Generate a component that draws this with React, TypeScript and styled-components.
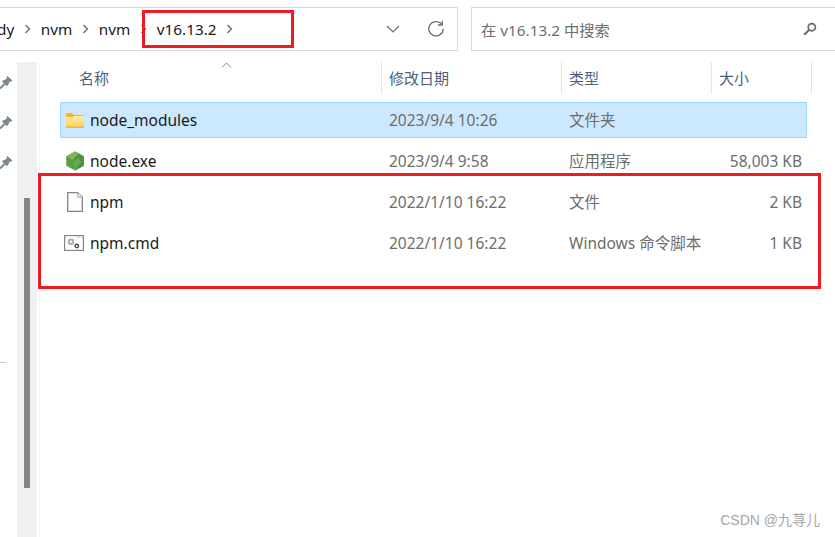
import React from 'react';
import styled, { createGlobalStyle } from 'styled-components';

const GlobalStyle = createGlobalStyle`
  html, body {
    margin: 0;
    padding: 0;
    background: #fff;
  }
`;

const Window = styled.div`
  position: relative;
  width: 835px;
  height: 537px;
  overflow: hidden;
  background: #fff;
  font-family: "Noto Sans", "Noto Sans CJK SC", sans-serif;
  font-size: 15.3px;
  color: #1a1a1a;
`;

const Toolbar = styled.div`
  display: flex;
  gap: 13px;
  height: 43px;
  padding-top: 7px;
  box-sizing: content-box;
`;

const AddressBox = styled.div`
  display: flex;
  align-items: center;
  width: 458px;
  flex-shrink: 0;
  box-sizing: border-box;
  height: 44px;
  border: 1px solid #d9d9d9;
  border-left: none;
`;

const Crumb = styled.span<{ $offset?: number }>`
  margin-left: ${({ $offset }) => $offset ?? 0}px;
  line-height: 42px;
`;

const Chevron = styled.svg`
  width: 7px;
  height: 10px;
  margin: 0 10px 0 9.5px;
  flex-shrink: 0;
`;

const AddressTools = styled.div`
  display: flex;
  align-items: center;
  margin-left: auto;
  height: 100%;
`;

const RefreshIcon = styled.svg`
  width: 18px;
  height: 18px;
  margin: 0 12px 0 27px;
`;

const SearchBox = styled.div`
  display: flex;
  align-items: center;
  justify-content: space-between;
  flex: 1;
  box-sizing: border-box;
  height: 44px;
  border: 1px solid #d9d9d9;
  border-right: none;
  padding: 0 18px 0 9px;
  color: #6e6e6e;
`;

const Body = styled.div`
  display: flex;
  height: 475px;
  margin-top: 12px;
`;

const PinRail = styled.div`
  display: flex;
  flex-direction: column;
  width: 17px;
  flex-shrink: 0;
  padding-top: 12px;
  gap: 23px;
  box-sizing: border-box;
`;

const PinRule = styled.div`
  width: 6px;
  height: 1px;
  margin-top: 168px;
  background: #c8c8c8;
`;

const ScrollTrack = styled.div`
  width: 20px;
  flex-shrink: 0;
  box-sizing: border-box;
  padding: 136px 7px 0;
  background: #f0f0f0;
`;

const ScrollThumb = styled.div`
  width: 6px;
  height: 290px;
  background: #858585;
`;

const Pane = styled.div`
  flex: 1;
  margin-left: 2px;
  border-left: 1px solid #f3f3f3;
`;

const HeaderRow = styled.div`
  position: relative;
  display: grid;
  grid-template-columns: 342px 180px 150px 100px;
  height: 32px;
`;

const HeaderCell = styled.div<{ $indent: number }>`
  display: flex;
  align-items: center;
  box-sizing: border-box;
  height: 32px;
  padding: 0 0 2px ${({ $indent }) => $indent}px;
  border-right: 1px solid #e5e5e5;
  font-size: 15px;
  color: #4c607a;
`;

const SortCaret = styled.svg`
  position: absolute;
  left: 181px;
  top: 0;
  width: 11px;
  height: 6px;
`;

const FileList = styled.div`
  display: flex;
  flex-direction: column;
  gap: 5px;
  margin: 8px 0 0 20px;
  width: 747px;
`;

const Row = styled.div<{ $selected?: boolean }>`
  display: grid;
  grid-template-columns: 328px 180px 150px 87px;
  align-items: center;
  height: 36px;
  box-sizing: border-box;
  border: 1px solid ${({ $selected }) => ($selected ? '#99d1ff' : 'transparent')};
  background: ${({ $selected }) => ($selected ? '#cce8ff' : 'transparent')};
  border-radius: 1px;
  font-size: 15.5px;
  line-height: 20px;
`;

const NameCell = styled.div`
  display: flex;
  align-items: center;
  gap: 5px;
  padding-left: 4px;
  color: #1a1a1a;
`;

const IconSlot = styled.div`
  display: flex;
  align-items: center;
  justify-content: center;
  width: 20px;
  height: 20px;
`;

const MetaCell = styled.div`
  color: #6d6d6d;
`;

const SizeCell = styled(MetaCell)`
  text-align: right;
  padding-right: 4px;
`;

const Annotation = styled.div<{ $l: number; $t: number; $w: number; $h: number }>`
  position: absolute;
  left: ${({ $l }) => $l}px;
  top: ${({ $t }) => $t}px;
  width: ${({ $w }) => $w}px;
  height: ${({ $h }) => $h}px;
  box-sizing: border-box;
  border: 3px solid #ed1c24;
`;

const Watermark = styled.div`
  position: absolute;
  right: 15px;
  bottom: 8px;
  font-family: "Liberation Sans", "Noto Sans CJK SC", sans-serif;
  font-size: 14px;
  color: #a6a6a6;
`;

const Arrow = () => (
  <Chevron viewBox="0 0 7 10">
    <path d="M1.5 1 L5.5 5 L1.5 9" fill="none" stroke="#6b6b6b" strokeWidth="1.3" />
  </Chevron>
);

const Pin = () => (
  <svg width="16" height="17" viewBox="0 0 16 17" style={{ marginLeft: -3 }}>
    <path d="M10.5 2 L15.5 6.5 L14 7.8 L12.8 7.4 L11 11 L10 12.2 L5 7.6 L6 6.6 L9.8 4.8 L9.4 3.2 Z" fill="#7c8790" />
    <path d="M7.5 10 L3 14.5" stroke="#7c8790" strokeWidth="2" />
  </svg>
);

const FolderIcon = () => (
  <svg width="18" height="15" viewBox="0 0 18 15">
    <defs>
      <linearGradient id="folderBody" x1="0" y1="0" x2="0" y2="1">
        <stop offset="0" stopColor="#fdeaa6" />
        <stop offset="1" stopColor="#fdd15e" />
      </linearGradient>
    </defs>
    <path d="M0 1 Q0 0 1 0 L6 0 L8 2 L18 2 L18 4 L0 4 Z" fill="#f4b52e" />
    <path d="M0 4 L7 4 L8.5 3 L18 3 L18 14 L0 14 Z" fill="url(#folderBody)" />
    <path d="M0 13.5 L18 13.5 L18 15 L0 15 Z" fill="#efb53c" />
  </svg>
);

const NodeIcon = () => (
  <svg width="18" height="20" viewBox="0 0 18 20">
    <path d="M9 0.4 L17.2 5 Q17.8 5.4 17.8 6 L17.8 14 Q17.8 14.6 17.2 15 L9 19.6 L0.8 15 Q0.2 14.6 0.2 14 L0.2 6 Q0.2 5.4 0.8 5 Z" fill="#5b9f45" />
    <path d="M9 0.4 L17.2 5 Q17.8 5.4 17.8 6 L17.8 14 Q17.8 14.6 17.2 15 L9 19.6 Z" fill="#4d8f3c" />
    <path d="M9 0.4 L0.8 5 L6 9 L12.5 3 Z" fill="#7ab85c" />
    <path d="M12.5 6 L15 11 L9 19.6 L7 11 Z" fill="#66a74d" />
  </svg>
);

const BlankFileIcon = () => (
  <svg width="16" height="20" viewBox="0 0 16 20">
    <path d="M0.7 0.7 L10.8 0.7 L15.3 5.2 L15.3 19.3 L0.7 19.3 Z" fill="#fdfdfd" stroke="#858585" strokeWidth="1.3" />
    <path d="M10.8 0.7 L10.8 5.2 L15.3 5.2" fill="#f2f2f2" stroke="#a0a0a0" />
  </svg>
);

const CmdIcon = () => (
  <svg width="20" height="16" viewBox="0 0 20 16" style={{ marginLeft: -3 }}>
    <rect x="0.6" y="0.6" width="18.8" height="14.8" fill="#fff" stroke="#858585" strokeWidth="1.2" />
    <path d="M13 2.2 L14 2.2 M15 2.2 L16 2.2 M17 2.2 L18 2.2" stroke="#b0b0b0" />
    <circle cx="7" cy="6.8" r="2.4" fill="#e8ecf0" stroke="#a4acb4" strokeWidth="1.8" />
    <circle cx="12.8" cy="11" r="1.7" fill="#fff" stroke="#4d4d4d" strokeWidth="1.5" />
  </svg>
);

const files = [
  { name: 'node_modules', date: '2023/9/4 10:26', type: '文件夹', size: '', icon: <FolderIcon />, selected: true },
  { name: 'node.exe', date: '2023/9/4 9:58', type: '应用程序', size: '58,003 KB', icon: <NodeIcon /> },
  { name: 'npm', date: '2022/1/10 16:22', type: '文件', size: '2 KB', icon: <BlankFileIcon /> },
  { name: 'npm.cmd', date: '2022/1/10 16:22', type: 'Windows 命令脚本', size: '1 KB', icon: <CmdIcon /> },
];

const App: React.FC = () => (
  <Window>
    <GlobalStyle />
    <Toolbar>
      <AddressBox>
        <Crumb $offset={-3}>dy</Crumb>
        <Arrow />
        <Crumb>nvm</Crumb>
        <Arrow />
        <Crumb>nvm</Crumb>
        <Arrow />
        <Crumb>v16.13.2</Crumb>
        <Arrow />
        <AddressTools>
          <svg width="14" height="8" viewBox="0 0 14 8">
            <path d="M1 1 L7 7 L13 1" fill="none" stroke="#6b6b6b" strokeWidth="1.2" />
          </svg>
          <RefreshIcon viewBox="0 0 18 18">
            <path d="M14.6 4.2 A7.2 7.2 0 1 0 16.2 9" fill="none" stroke="#6b6b6b" strokeWidth="1.3" />
            <path d="M15.2 0.8 L15.2 5 L11 5" fill="none" stroke="#6b6b6b" strokeWidth="1.3" />
          </RefreshIcon>
        </AddressTools>
      </AddressBox>
      <SearchBox>
        <span>在 v16.13.2 中搜索</span>
        <svg width="14" height="14" viewBox="0 0 14 14">
          <circle cx="8.8" cy="5.2" r="3.6" fill="none" stroke="#6a6a6a" strokeWidth="1.7" />
          <path d="M6 8 L1.2 12.8" stroke="#6a6a6a" strokeWidth="2.1" />
        </svg>
      </SearchBox>
    </Toolbar>
    <Body>
      <PinRail>
        <Pin />
        <Pin />
        <Pin />
        <PinRule />
      </PinRail>
      <ScrollTrack>
        <ScrollThumb />
      </ScrollTrack>
      <Pane>
        <HeaderRow>
          <HeaderCell $indent={39}>名称</HeaderCell>
          <HeaderCell $indent={7}>修改日期</HeaderCell>
          <HeaderCell $indent={7}>类型</HeaderCell>
          <HeaderCell $indent={7}>大小</HeaderCell>
          <SortCaret viewBox="0 0 11 6">
            <path d="M1 5.5 L5.5 1 L10 5.5" fill="none" stroke="#8a8a8a" />
          </SortCaret>
        </HeaderRow>
        <FileList>
          {files.map((file) => (
            <Row key={file.name} $selected={file.selected}>
              <NameCell>
                <IconSlot>{file.icon}</IconSlot>
                {file.name}
              </NameCell>
              <MetaCell>{file.date}</MetaCell>
              <MetaCell>{file.type}</MetaCell>
              <SizeCell>{file.size}</SizeCell>
            </Row>
          ))}
        </FileList>
      </Pane>
    </Body>
    <Annotation $l={142} $t={10} $w={152} $h={38} />
    <Annotation $l={38} $t={173} $w={783} $h={116} />
    <Watermark>CSDN @九荨儿</Watermark>
  </Window>
);

export default App;
